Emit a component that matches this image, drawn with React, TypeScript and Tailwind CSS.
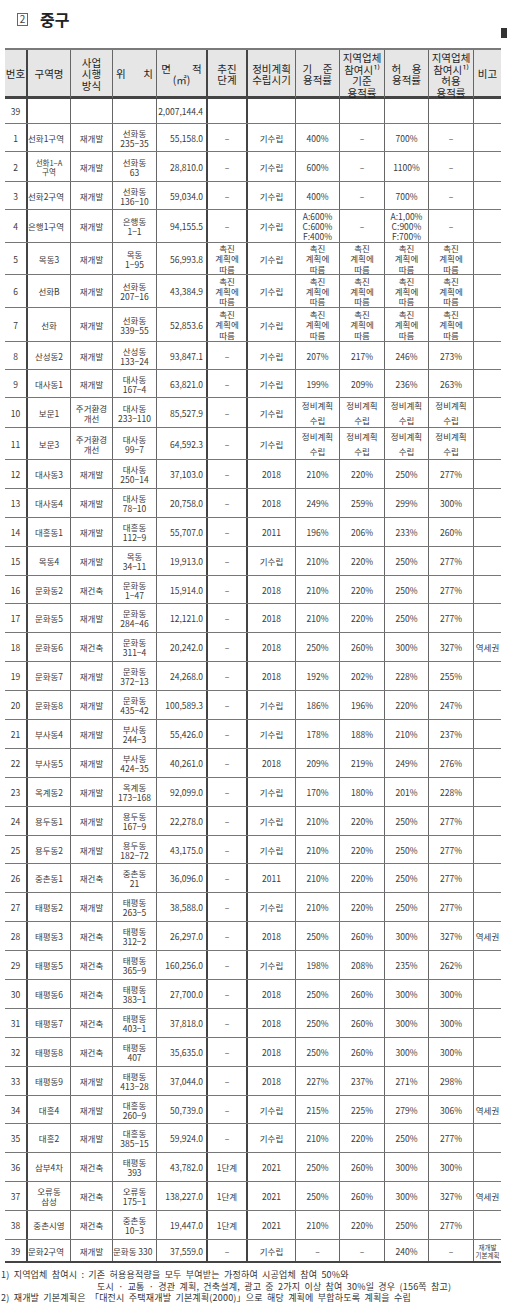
import React from "react";

const GRID =
  "grid grid-cols-[23px_43px_42px_44px_51px_40px_48px_44px_45px_44px_45px_27px]";

const BC = [
  "border-r-2 border-[#444]",
  "border-r border-[#666]",
  "border-r border-[#666]",
  "border-r border-[#666]",
  "border-r-2 border-[#444]",
  "border-r-2 border-[#444]",
  "border-r border-[#666]",
  "border-r border-[#666]",
  "border-r border-[#666]",
  "border-r border-[#666]",
  "border-r border-[#666]",
  "",
];

const D = "–";
const P = "촉진\n계획에\n따름";
const J = "정비계획\n수립";

type Row = { h: string; c: string[]; left?: number[]; last?: boolean };

const rows: Row[] = [
  { h: "h-[25px]", c: ["39", "", "", "", "2,007,144.4", "", "", "", "", "", "", ""] },
  { h: "h-[28px]", c: ["1", "선화1구역", "재개발", "선화동\n235−35", "55,158.0", D, "기수립", "400%", D, "700%", D, ""], left: [1] },
  { h: "h-[30px]", c: ["2", "선화1−A\n구역", "재개발", "선화동\n63", "28,810.0", D, "기수립", "600%", D, "1100%", D, ""] },
  { h: "h-[28px]", c: ["3", "선화2구역", "재개발", "선화동\n136−10", "59,034.0", D, "기수립", "400%", D, "700%", D, ""], left: [1] },
  { h: "h-[33px]", c: ["4", "은행1구역", "재개발", "은행동\n1−1", "94,155.5", D, "기수립", "A:600%\nC:600%\nF:400%", D, "A:1,00%\nC:900%\nF:700%", D, ""], left: [1] },
  { h: "h-[32px]", c: ["5", "목동3", "재개발", "목동\n1−95", "56,993.8", P, "기수립", P, P, P, P, ""] },
  { h: "h-[33px]", c: ["6", "선화B", "재개발", "선화동\n207−16", "43,384.9", P, "기수립", P, P, P, P, ""] },
  { h: "h-[34px]", c: ["7", "선화", "재개발", "선화동\n339−55", "52,853.6", P, "기수립", P, P, P, P, ""] },
  { h: "h-[28px]", c: ["8", "산성동2", "재개발", "산성동\n133−24", "93,847.1", D, "기수립", "207%", "217%", "246%", "273%", ""] },
  { h: "h-[28px]", c: ["9", "대사동1", "재개발", "대사동\n167−4", "63,821.0", D, "기수립", "199%", "209%", "236%", "263%", ""] },
  { h: "h-[30px]", c: ["10", "보문1", "주거환경\n개선", "대사동\n233−110", "85,527.9", D, "기수립", J, J, J, J, ""] },
  { h: "h-[32px]", c: ["11", "보문3", "주거환경\n개선", "대사동\n99−7", "64,592.3", D, "기수립", J, J, J, J, ""] },
  { h: "h-[28.9px]", c: ["12", "대사동3", "재개발", "대사동\n250−14", "37,103.0", D, "2018", "210%", "220%", "250%", "277%", ""] },
  { h: "h-[28.9px]", c: ["13", "대사동4", "재개발", "대사동\n78−10", "20,758.0", D, "2018", "249%", "259%", "299%", "300%", ""] },
  { h: "h-[28.9px]", c: ["14", "대흥동1", "재개발", "대흥동\n112−9", "55,707.0", D, "2011", "196%", "206%", "233%", "260%", ""] },
  { h: "h-[28.9px]", c: ["15", "목동4", "재개발", "목동\n34−11", "19,913.0", D, "기수립", "210%", "220%", "250%", "277%", ""] },
  { h: "h-[28.9px]", c: ["16", "문화동2", "재건축", "문화동\n1−47", "15,914.0", D, "2018", "210%", "220%", "250%", "277%", ""] },
  { h: "h-[28.9px]", c: ["17", "문화동5", "재개발", "문화동\n284−46", "12,121.0", D, "2018", "210%", "220%", "250%", "277%", ""] },
  { h: "h-[28.9px]", c: ["18", "문화동6", "재건축", "문화동\n311−4", "20,242.0", D, "2018", "250%", "260%", "300%", "327%", "역세권"] },
  { h: "h-[28.9px]", c: ["19", "문화동7", "재개발", "문화동\n372−13", "24,268.0", D, "2018", "192%", "202%", "228%", "255%", ""] },
  { h: "h-[28.9px]", c: ["20", "문화동8", "재개발", "문화동\n435−42", "100,589.3", D, "기수립", "186%", "196%", "220%", "247%", ""] },
  { h: "h-[28.9px]", c: ["21", "부사동4", "재개발", "부사동\n244−3", "55,426.0", D, "기수립", "178%", "188%", "210%", "237%", ""] },
  { h: "h-[28.9px]", c: ["22", "부사동5", "재개발", "부사동\n424−35", "40,261.0", D, "2018", "209%", "219%", "249%", "276%", ""] },
  { h: "h-[28.9px]", c: ["23", "옥계동2", "재개발", "옥계동\n173−168", "92,099.0", D, "기수립", "170%", "180%", "201%", "228%", ""] },
  { h: "h-[28.9px]", c: ["24", "용두동1", "재개발", "용두동\n167−9", "22,278.0", D, "기수립", "210%", "220%", "250%", "277%", ""] },
  { h: "h-[28.9px]", c: ["25", "용두동2", "재개발", "용두동\n182−72", "43,175.0", D, "기수립", "210%", "220%", "250%", "277%", ""] },
  { h: "h-[28.9px]", c: ["26", "중촌동1", "재건축", "중촌동\n21", "36,096.0", D, "2011", "210%", "220%", "250%", "277%", ""] },
  { h: "h-[28.9px]", c: ["27", "태평동2", "재개발", "태평동\n263−5", "38,588.0", D, "기수립", "210%", "220%", "250%", "277%", ""] },
  { h: "h-[28.9px]", c: ["28", "태평동3", "재건축", "태평동\n312−2", "26,297.0", D, "2018", "250%", "260%", "300%", "327%", "역세권"] },
  { h: "h-[28.9px]", c: ["29", "태평동5", "재건축", "태평동\n365−9", "160,256.0", D, "기수립", "198%", "208%", "235%", "262%", ""] },
  { h: "h-[28.9px]", c: ["30", "태평동6", "재건축", "태평동\n383−1", "27,700.0", D, "2018", "250%", "260%", "300%", "300%", ""] },
  { h: "h-[28.9px]", c: ["31", "태평동7", "재건축", "태평동\n403−1", "37,818.0", D, "2018", "250%", "260%", "300%", "300%", ""] },
  { h: "h-[28.9px]", c: ["32", "태평동8", "재건축", "태평동\n407", "35,635.0", D, "2018", "250%", "260%", "300%", "300%", ""] },
  { h: "h-[28.9px]", c: ["33", "태평동9", "재개발", "태평동\n413−28", "37,044.0", D, "2018", "227%", "237%", "271%", "298%", ""] },
  { h: "h-[28.9px]", c: ["34", "대흥4", "재개발", "대흥동\n260−9", "50,739.0", D, "기수립", "215%", "225%", "279%", "306%", "역세권"] },
  { h: "h-[28.9px]", c: ["35", "대흥2", "재개발", "대흥동\n385−15", "59,924.0", D, "기수립", "210%", "220%", "250%", "277%", ""] },
  { h: "h-[28.9px]", c: ["36", "삼부4차", "재건축", "태평동\n393", "43,782.0", "1단계", "2021", "250%", "260%", "300%", "300%", ""] },
  { h: "h-[28.9px]", c: ["37", "오류동\n삼성", "재건축", "오류동\n175−1", "138,227.0", "1단계", "2021", "250%", "260%", "300%", "327%", "역세권"] },
  { h: "h-[28.9px]", c: ["38", "중촌시영", "재건축", "중촌동\n10−3", "19,447.0", "1단계", "2021", "210%", "220%", "250%", "277%", ""] },
  { h: "h-[23px]", c: ["39", "문화2구역", "재개발", "문화동 330", "37,559.0", D, "기수립", D, D, "240%", D, "재개발\n기본계획"], left: [1, 3], last: true },
];

function HeaderCell({ i, children }: { i: number; children: React.ReactNode }) {
  return (
    <div className={`${BC[i]} flex items-center justify-center text-center whitespace-pre-wrap leading-[11.5px]`}>
      {children}
    </div>
  );
}

function Header() {
  return (
    <div className={`${GRID} h-[51px] bg-[#e6e6e6] border-t-2 border-t-[#7a7a7a] border-b-[3px] border-b-[#444] text-[10.5px] text-[#1e1e1e]`}>
      <HeaderCell i={0}>번호</HeaderCell>
      <HeaderCell i={1}>구역명</HeaderCell>
      <HeaderCell i={2}>{"사업\n시행\n방식"}</HeaderCell>
      <HeaderCell i={3}>
        <div className="flex w-full justify-between px-[3px]">
          <span>위</span>
          <span>치</span>
        </div>
      </HeaderCell>
      <HeaderCell i={4}>{"면\u2003\u2003적\n(㎡)"}</HeaderCell>
      <HeaderCell i={5}>{"추진\n단계"}</HeaderCell>
      <HeaderCell i={6}>{"정비계획\n수립시기"}</HeaderCell>
      <HeaderCell i={7}>{"기\u2002\u2002준\n용적률"}</HeaderCell>
      <HeaderCell i={8}>
        <span className="pt-[2px]">{"지역업체\n참여시¹⁾\n기준\n용적률"}</span>
      </HeaderCell>
      <HeaderCell i={9}>{"허\u2002\u2002용\n용적률"}</HeaderCell>
      <HeaderCell i={10}>
        <span className="pt-[2px]">{"지역업체\n참여시¹⁾\n허용\n용적률"}</span>
      </HeaderCell>
      <HeaderCell i={11}>비고</HeaderCell>
    </div>
  );
}

function BodyRow({ r }: { r: Row }) {
  const bottom = r.last ? "border-b-2 border-b-[#444]" : "border-b border-b-[#777]";
  return (
    <div className={`${GRID} ${r.h} ${bottom}`}>
      {r.c.map((t, i) => {
        const isLeft = r.left?.includes(i);
        const isNum = i === 4;
        const justify = isNum ? "justify-end pr-[3px] text-right" : isLeft ? "justify-start text-left" : "justify-center text-center";
        let lead = "leading-[10px]";
        if (t === J) lead = "leading-[15px]";
        else if (t.split("\n").length === 3) lead = "leading-[10.3px]";
        let size = "text-[8.5px]";
        if (t.includes("기본계획")) {
          size = "text-[6.5px]";
          lead = "leading-[8px]";
        } else if (t === "선화1−A\n구역") {
          size = "text-[7.5px]";
          lead = "leading-[9px]";
        }
        return (
          <div key={i} className={`${BC[i]} flex items-center ${justify} whitespace-pre-line overflow-visible ${size} ${lead}`}>
            {t}
          </div>
        );
      })}
    </div>
  );
}

export default function App() {
  return (
    <div className="w-[507px] bg-white pt-[10px] font-['Noto_Sans_CJK_KR','Noto_Sans',sans-serif] text-[#3a3a3a]">
      <div className="flex items-start justify-between h-[38px]">
        <div className="flex items-center pl-[17px] h-[18px]">
          <div className="w-[11px] h-[13px] border border-[#666] flex items-center justify-center text-[10px] leading-none text-[#444]">
            2
          </div>
          <div className="ml-[12px] text-[16px] font-bold text-[#222] leading-none">중구</div>
        </div>
        <div className="mt-[18px] w-[6px] h-[10px] bg-[#333]" />
      </div>
      <div className="ml-[5px] w-[496px]">
        <Header />
        {rows.map((r, i) => (
          <BodyRow key={i} r={r} />
        ))}
      </div>
      <div className="pl-[1px] pt-[6px] text-[9px] leading-[11.5px] text-[#333] tracking-[0.2px] [word-spacing:2px]">
        <div>1) 지역업체 참여시 : 기존 허용용적량을 모두 부여받는 가정하여 시공업체 참여 50%와</div>
        <div className="pl-[96px]">도시 · 교통 · 경관 계획, 건축설계, 광고 중 2가지 이상 참여 30%일 경우 (156쪽 참고)</div>
        <div>2) 재개발 기본계획은 「대전시 주택재개발 기본계획(2000)」으로 해당 계획에 부합하도록 계획을 수립</div>
      </div>
    </div>
  );
}
